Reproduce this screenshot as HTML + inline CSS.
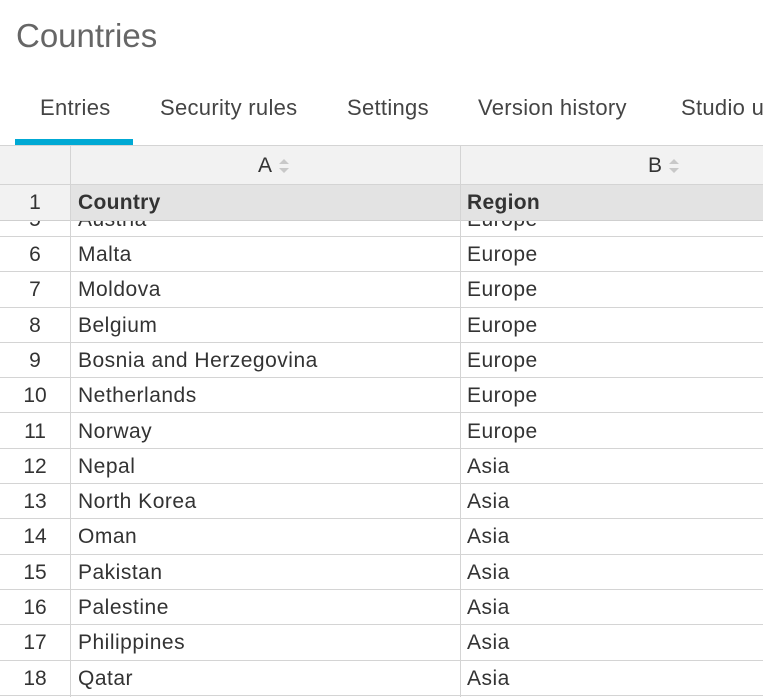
<!DOCTYPE html>
<html><head><meta charset="utf-8"><style>
*{margin:0;padding:0;box-sizing:border-box}
body{width:763px;height:697px;overflow:hidden;background:#fff;font-family:"Liberation Sans",sans-serif;color:#333;position:relative}
.t{position:absolute;white-space:nowrap}
.title{left:16px;top:17px;font-size:33px;color:#666;letter-spacing:0px}
.tab{top:95px;font-size:22px;color:#444;letter-spacing:0.3px}
.ul{position:absolute;left:15px;top:139px;width:118px;height:6px;background:#00a9d4}
.hdr{position:absolute;left:0;top:145px;width:763px;height:40px;background:#f2f2f2;border-top:1px solid #d4d4d4;border-bottom:1px solid #d4d4d4}
.r1{position:absolute;left:0;top:185px;width:763px;height:36px;background:#e3e3e3;border-bottom:1px solid #cfcfcf;z-index:2}
.r1 .c0{background:#f2f2f2}
.vl{position:absolute;top:145px;width:1px;height:552px;background:#d4d4d4;z-index:3}
.row{position:absolute;left:0;width:763px;height:35.3px;border-bottom:1px solid #d4d4d4;font-size:21px;letter-spacing:0.5px}
.c0{position:absolute;left:0;width:70px;height:100%;text-align:center;line-height:36px;color:#333;letter-spacing:0}
.c1{position:absolute;left:78px;line-height:36px}
.c2{position:absolute;left:467px;line-height:36px}
.b{font-weight:bold;font-size:21px;letter-spacing:0.3px}
.arr{display:inline-block;vertical-align:middle;margin-left:6px}
</style></head><body>
<div class="t title">Countries</div>
<div class="t tab" style="left:40px">Entries</div>
<div class="t tab" style="left:160px">Security rules</div>
<div class="t tab" style="left:347px">Settings</div>
<div class="t tab" style="left:478px">Version history</div>
<div class="t tab" style="left:681px">Studio u</div>
<div class="ul"></div>
<div class="hdr">
 <div class="t" style="left:258px;top:8px;font-size:21px;color:#333">A<svg class="arr" width="12" height="18" viewBox="0 0 12 18"><path d="M1 7L6 2L11 7Z M1 11L6 16L11 11Z" fill="#c8c8c8"/></svg></div>
 <div class="t" style="left:648px;top:8px;font-size:21px;color:#333">B<svg class="arr" width="12" height="18" viewBox="0 0 12 18"><path d="M1 7L6 2L11 7Z M1 11L6 16L11 11Z" fill="#c8c8c8"/></svg></div>
</div>
<div class="vl" style="left:70px"></div>
<div class="vl" style="left:460px"></div>
<div class="r1"><div class="c0" style="font-size:21px">1</div><div class="c1 b">Country</div><div class="c2 b">Region</div></div>
<div class="row" style="top:202px"><div class="c0">5</div><div class="c1">Austria</div><div class="c2">Europe</div></div>
<div class="row" style="top:237px"><div class="c0">6</div><div class="c1">Malta</div><div class="c2">Europe</div></div>
<div class="row" style="top:272.3px"><div class="c0">7</div><div class="c1">Moldova</div><div class="c2">Europe</div></div>
<div class="row" style="top:307.6px"><div class="c0">8</div><div class="c1">Belgium</div><div class="c2">Europe</div></div>
<div class="row" style="top:342.9px"><div class="c0">9</div><div class="c1">Bosnia and Herzegovina</div><div class="c2">Europe</div></div>
<div class="row" style="top:378.2px"><div class="c0">10</div><div class="c1">Netherlands</div><div class="c2">Europe</div></div>
<div class="row" style="top:413.5px"><div class="c0">11</div><div class="c1">Norway</div><div class="c2">Europe</div></div>
<div class="row" style="top:448.8px"><div class="c0">12</div><div class="c1">Nepal</div><div class="c2">Asia</div></div>
<div class="row" style="top:484.1px"><div class="c0">13</div><div class="c1">North Korea</div><div class="c2">Asia</div></div>
<div class="row" style="top:519.4px"><div class="c0">14</div><div class="c1">Oman</div><div class="c2">Asia</div></div>
<div class="row" style="top:554.7px"><div class="c0">15</div><div class="c1">Pakistan</div><div class="c2">Asia</div></div>
<div class="row" style="top:590px"><div class="c0">16</div><div class="c1">Palestine</div><div class="c2">Asia</div></div>
<div class="row" style="top:625.3px"><div class="c0">17</div><div class="c1">Philippines</div><div class="c2">Asia</div></div>
<div class="row" style="top:660.6px"><div class="c0">18</div><div class="c1">Qatar</div><div class="c2">Asia</div></div>
</body></html>
